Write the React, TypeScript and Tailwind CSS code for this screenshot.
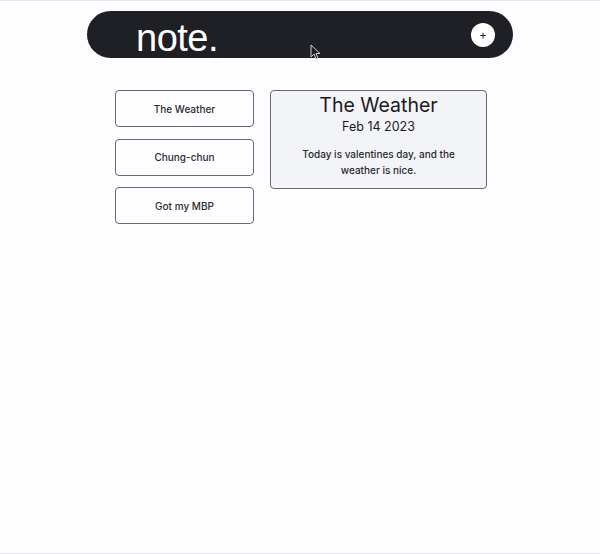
import React from "react";

const notes = ["The Weather", "Chung-chun", "Got my MBP"];

export default function App() {
  return (
    <div
      className="relative w-[600px] h-[554px] bg-[#fdfcfe] border-y border-[#e4e4e6] overflow-hidden"
      style={{ fontFamily: "Inter, 'Noto Sans', sans-serif" }}
    >
      <div className="flex justify-center pt-[10px]">
        <header className="w-[426px] h-[47px] rounded-full bg-[#1f2026] flex items-center justify-between pl-[49px] pr-[18px]">
          <span
            className="text-white text-[38px] leading-none tracking-[-0.5px] mt-[6px]"
            style={{ fontFamily: "'Liberation Sans', Arial, sans-serif" }}
          >
            note.
          </span>
          <button className="w-[24px] h-[24px] rounded-full bg-white flex items-center justify-center text-[#1f2026] text-[12px] leading-none">
            +
          </button>
        </header>
      </div>

      <main className="flex justify-center gap-[16px] mt-[32px] pl-[2px]">
        <div className="flex flex-col gap-[11.5px] w-[139px]">
          {notes.map((n) => (
            <div
              key={n}
              className="h-[37px] border border-[#6b6b6e] rounded-[4px] flex items-center justify-center text-[10px] font-medium text-[#2a2a2e] pt-[1px]"
            >
              {n}
            </div>
          ))}
        </div>
        <div className="w-[217px] h-[99px] border border-[#6b6b6e] rounded-[4px] bg-[#f3f4f7] flex flex-col items-center pt-[2px]">
          <div className="text-[19.5px] leading-[25px] text-[#1a1a1e]">The Weather</div>
          <div className="text-[12.5px] leading-[17px] text-[#1a1a1e]">Feb 14 2023</div>
          <p className="mt-[11px] text-[10px] font-medium leading-[16px] text-center text-[#2a2a2e] px-[20px]">
            Today is valentines day, and the weather is nice.
          </p>
        </div>
      </main>

      <svg className="absolute left-[310px] top-[43px]" width="11" height="16" viewBox="0 0 11 16">
        <path d="M1 1 L1 13 L4 10 L6 15 L8 14 L6 9.5 L10 9.5 Z" fill="#1f2026" stroke="#cfcfd4" strokeWidth="1" />
      </svg>
    </div>
  );
}
